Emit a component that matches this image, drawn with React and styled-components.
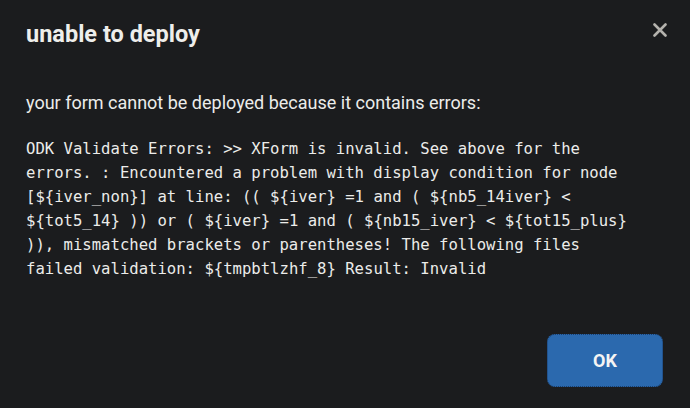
import React from 'react'
import styled, { createGlobalStyle } from 'styled-components'

const Global = createGlobalStyle`
  html, body {
    margin: 0;
    padding: 0;
    background: #1b1c1e;
  }
`

const Modal = () => {
  return (
    <Dialog>
      <Header>
        <Title>unable to deploy</Title>
        <CloseButton aria-label="close">
          <svg width="14" height="14" viewBox="0 0 14 14">
            <path d="M1.5 1.5 L12.5 12.5 M12.5 1.5 L1.5 12.5" stroke="#b4b2ad" strokeWidth="2.6" strokeLinecap="round" />
          </svg>
        </CloseButton>
      </Header>
      <Body>
        <Lead>your form cannot be deployed because it contains errors:</Lead>
        <ErrorText>
          ODK Validate Errors: &gt;&gt; XForm is invalid. See above for the errors. : Encountered a problem with display condition for node [{'${iver_non}'}] at line: (( {'${iver}'} =1 and ( {'${nb5_14iver}'} &lt; {'${tot5_14}'} )) or ( {'${iver}'} =1 and ( {'${nb15_iver}'} &lt; {'${tot15_plus}'} )), mismatched brackets or parentheses! The following files failed validation: {'${tmpbtlzhf_8}'} Result: Invalid
        </ErrorText>
      </Body>
      <Footer>
        <OkButton>OK</OkButton>
      </Footer>
    </Dialog>
  )
}

const Dialog = styled.div`
  width: 690px;
  height: 408px;
  box-sizing: border-box;
  background: #1b1c1e;
  color: #ececea;
  display: flex;
  flex-direction: column;
  padding: 0 26px;
`
const Header = styled.div`
  display: flex;
  justify-content: space-between;
  align-items: center;
  height: 70px;
`
const Title = styled.h2`
  margin: 0;
  margin-top: -2px;
  font-family: Roboto, "Noto Sans", sans-serif;
  font-weight: 700;
  font-size: 23.5px;
  color: #eeeeeb;
`
const CloseButton = styled.button`
  background: none;
  border: none;
  padding: 0;
  margin-right: -3px;
  margin-top: -10px;
  display: flex;
  cursor: pointer;
`
const Body = styled.div`
  padding-top: 21px;
`
const Lead = styled.p`
  margin: 0 0 22px;
  font-family: Roboto, "Noto Sans", sans-serif;
  font-size: 18px;
  line-height: 24px;
  color: #ececea;
`
const ErrorText = styled.p`
  margin: 0;
  font-family: "DejaVu Sans Mono", monospace;
  font-size: 15.6px;
  line-height: 24px;
  color: #ececea;
  width: 610px;
`
const Footer = styled.div`
  margin-top: auto;
  display: flex;
  justify-content: flex-end;
  padding-bottom: 21px;
`
const OkButton = styled.button`
  width: 116px;
  height: 53px;
  margin-right: 1px;
  background: #2b69ae;
  color: #f4f4f4;
  border: 1px dotted #1a3f6e;
  border-radius: 8px;
  font-family: Roboto, "Noto Sans", sans-serif;
  font-weight: 700;
  font-size: 18px;
  cursor: pointer;
`

export default function App() {
  return (
    <>
      <Global />
      <Modal />
    </>
  )
}
